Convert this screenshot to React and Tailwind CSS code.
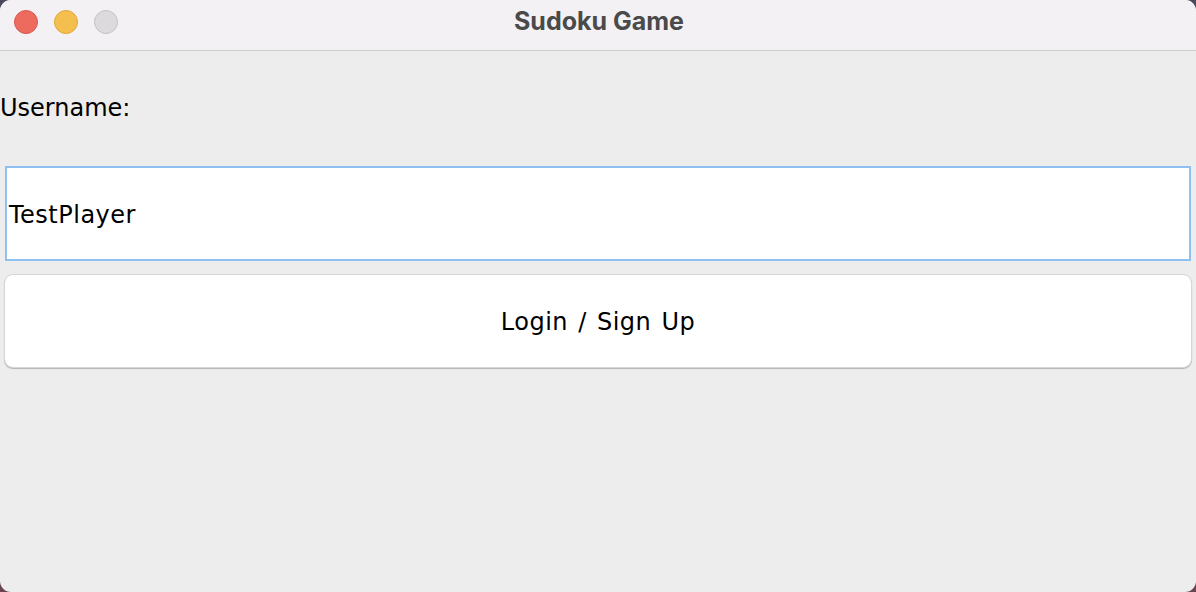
export default function App() {
  return (
    <div className="w-[1196px] h-[592px] bg-[linear-gradient(180deg,#4a4a5c_0%,#5a4458_60%,#6a4450_100%)] overflow-hidden">
      <div className="w-full h-full rounded-[11px] overflow-hidden bg-[#ededed] flex flex-col" style={{ fontFamily: '"DejaVu Sans", "Noto Sans", sans-serif' }}>
        <div className="relative h-[51px] shrink-0 bg-[#f3f1f3] border-b border-[#cdcdcd] flex items-center justify-center">
          <div className="absolute left-[14px] top-[10px] flex gap-[16px]">
            <div className="w-[24px] h-[24px] rounded-full bg-[#ed6a5e] border border-[#d8584d]" />
            <div className="w-[24px] h-[24px] rounded-full bg-[#f5bf4f] border border-[#dea73c]" />
            <div className="w-[24px] h-[24px] rounded-full bg-[#dcdadc] border border-[#c4c2c4]" />
          </div>
          <div className="text-[25px] font-bold text-[#4a4a4a] -mt-[6px] ml-[2px]" style={{ fontFamily: 'Inter, "Liberation Sans", sans-serif' }}>Sudoku Game</div>
        </div>
        <div className="flex flex-col">
          <div className="h-[115px] flex items-center text-[24px] text-black leading-none pb-[2px]">Username:</div>
          <div className="mx-[5px] h-[95px] bg-white border-2 border-[#90bff2] flex items-center pl-[2px] pt-[2px] text-[24px] tracking-[0.5px] text-black">TestPlayer</div>
          <div className="mx-[4px] mt-[13px] h-[94px] bg-white rounded-[9px] border border-[#d6d6d6] shadow-[0_1px_1px_rgba(0,0,0,0.25)] flex items-center justify-center pt-[2px] text-[24px] tracking-[0.5px] [word-spacing:2px] text-black">Login / Sign Up</div>
        </div>
      </div>
    </div>
  );
}
